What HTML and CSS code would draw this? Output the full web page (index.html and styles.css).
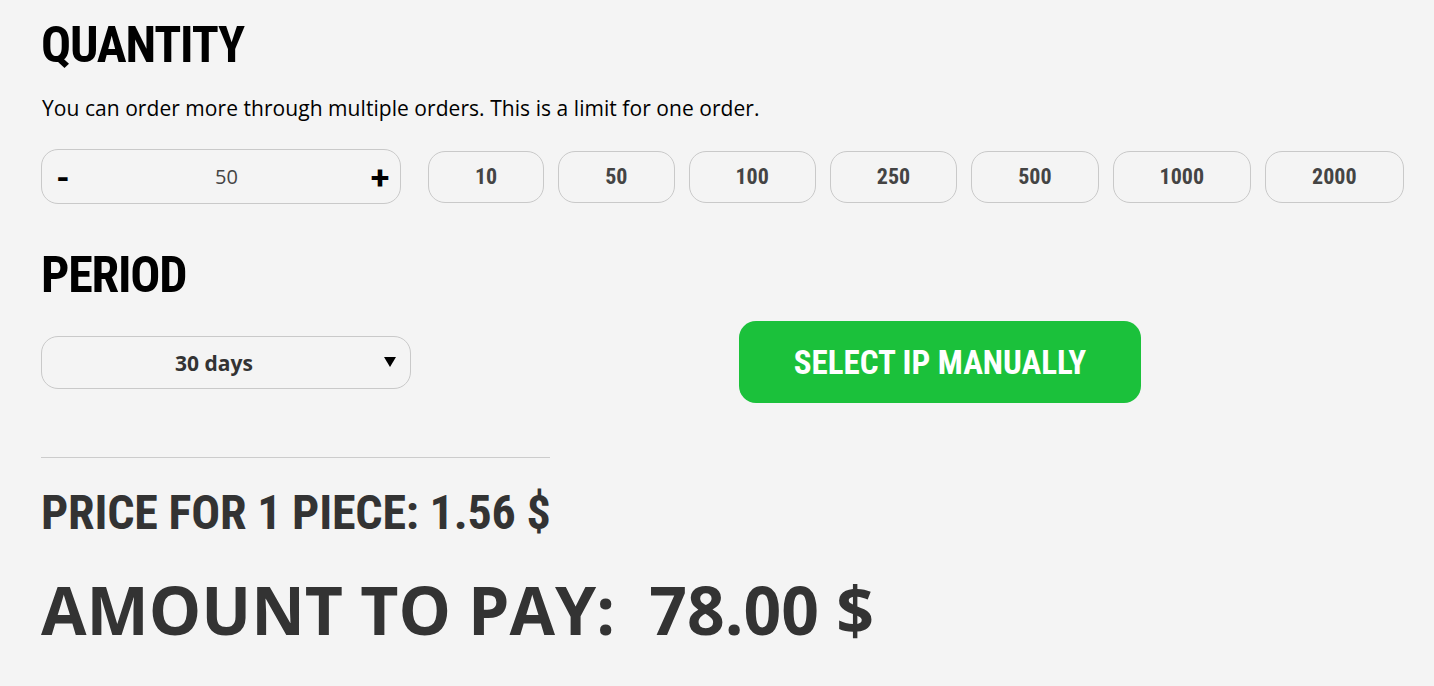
FILE: index.html
```html
<!DOCTYPE html>
<html lang="en">
<head>
<meta charset="utf-8">
<title>Order</title>
<link rel="stylesheet" href="styles.css">
</head>
<body>
<main class="page">
  <section class="quantity">
    <h2 class="title">QUANTITY</h2>
    <p class="hint">You can order more through multiple orders. This is a limit for one order.</p>
    <div class="qty-row">
      <div class="stepper">
        <button class="step minus">-</button>
        <span class="qty-value">50</span>
        <button class="step plus">+</button>
      </div>
      <div class="presets">
        <button class="preset">10</button>
        <button class="preset">50</button>
        <button class="preset">100</button>
        <button class="preset">250</button>
        <button class="preset">500</button>
        <button class="preset">1000</button>
        <button class="preset">2000</button>
      </div>
    </div>
  </section>
  <section class="period-row">
    <div class="period">
      <h2 class="title">PERIOD</h2>
      <div class="select">
        <span class="select-value">30 days</span>
        <svg class="caret" width="12" height="10" viewBox="0 0 12 10"><path d="M0 0H12L6 10Z" fill="#000"/></svg>
      </div>
    </div>
    <button class="manual">SELECT IP MANUALLY</button>
  </section>
  <hr class="divider">
  <div class="price">PRICE FOR 1 PIECE: 1.56 $</div>
  <div class="amount">AMOUNT TO PAY: <span class="sum">78.00 $</span></div>
</main>
</body>
</html>
```
FILE: styles.css
```css
html, body {
  margin: 0;
  padding: 0;
  background: #f4f4f4;
}
body {
  font-family: "Open Sans", "Liberation Sans", sans-serif;
  color: #000;
}
.page {
  padding: 14px 20px 0 41px;
}
.title {
  margin: 0;
  font-family: "Roboto Condensed", "Roboto", sans-serif;
  font-stretch: 75%;
  font-weight: 700;
  font-size: 50px;
  letter-spacing: -1.2px;
  line-height: 62px;
  color: #000;
}
.hint {
  margin: 18px 0 0 1px;
  font-size: 21px;
  letter-spacing: 0.05px;
  line-height: 28px;
}
.qty-row {
  display: flex;
  align-items: center;
  gap: 27px;
  margin-top: 27px;
}
.stepper {
  box-sizing: border-box;
  flex-shrink: 0;
  width: 360px;
  height: 55px;
  border: 1px solid #c9c9c9;
  border-radius: 17px;
  display: flex;
  align-items: center;
  justify-content: space-between;
  padding: 0 6px 0 7px;
}
.step {
  background: none;
  border: 0;
  font-family: "Roboto", sans-serif;
  font-weight: 700;
  font-size: 34px;
  line-height: 40px;
  color: #000;
  padding: 0;
  width: 28px;
  text-align: center;
}
.qty-value {
  margin-left: 10px;
  font-size: 20px;
  color: #444;
}
.presets {
  display: flex;
  flex-shrink: 0;
  gap: 14px;
}
.preset {
  box-sizing: border-box;
  height: 52px;
  padding: 0 46px;
  border: 1px solid #c9c9c9;
  border-radius: 17px;
  background: transparent;
  font-family: "Roboto Condensed", "Roboto", sans-serif;
  font-stretch: 75%;
  font-weight: 700;
  font-size: 22px;
  color: #444;
}
.period-row {
  display: flex;
  align-items: flex-start;
  margin-top: 40px;
}
.period {
  width: 370px;
}
.select {
  box-sizing: border-box;
  margin-top: 30px;
  height: 53px;
  padding-right: 24px;
  border: 1px solid #c9c9c9;
  border-radius: 17px;
  display: flex;
  align-items: center;
  justify-content: center;
  position: relative;
}
.select-value {
  font-weight: 700;
  font-size: 21px;
  color: #333;
}
.caret {
  position: absolute;
  right: 14px;
  top: 20px;
}
.manual {
  margin: 77px 0 0 328px;
  width: 402px;
  height: 82px;
  border: 0;
  border-radius: 17px;
  background: #1bc13b;
  color: #fff;
  font-family: "Roboto Condensed", "Roboto", sans-serif;
  font-stretch: 75%;
  font-weight: 700;
  font-size: 33px;
}
.divider {
  width: 509px;
  margin: 54px 0 0 0;
  border: 0;
  border-top: 1px solid #ccc;
}
.price {
  margin-top: 27px;
  font-family: "Roboto Condensed", "Roboto", sans-serif;
  font-stretch: 75%;
  font-weight: 700;
  font-size: 48px;
  letter-spacing: -0.2px;
  line-height: 56px;
  color: #333;
}
.amount {
  margin-top: 28px;
  font-family: "Open Sans", sans-serif;
  font-weight: 700;
  font-size: 66px;
  line-height: 80px;
  color: #333;
  white-space: pre;
}
.sum {
  margin-left: 17px;
}
```
